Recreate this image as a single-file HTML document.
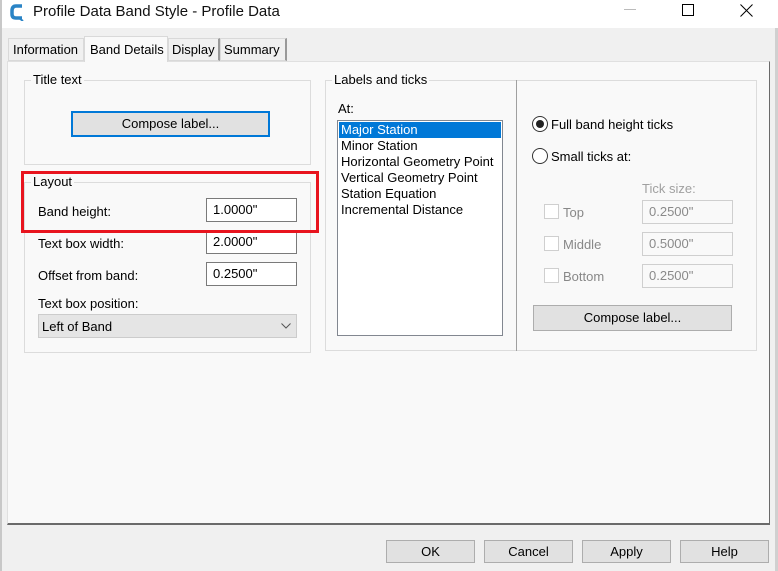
<!DOCTYPE html>
<html><head><style>
*{margin:0;padding:0;box-sizing:border-box}
body{width:778px;height:571px;background:#f0f0f0;font-family:"Liberation Sans",sans-serif;font-size:13px;color:#000;position:relative;overflow:hidden}
.a{position:absolute}
.gb{position:absolute;border:1px solid #dcdcdc}
.lg{position:absolute;background:#f9f9f9;padding:0 2px;top:-9px;font-size:13px}
.btn{position:absolute;background:#e1e1e1;border:1px solid #adadad;text-align:center}
.tb{position:absolute;background:#fff;border:1px solid #7a7a7a;padding-left:6px;line-height:22px}
.dis{color:#a0a0a0}
.cb{position:absolute;width:15px;height:15px;border:1px solid #cfcfcf;background:#fff}
.dtb{position:absolute;border:1px solid #cfcfcf;background:#f9f9f9;color:#8a8a8a;padding-left:6px;line-height:22px}
</style></head><body>
<div class="a" style="left:0;top:0;width:778px;height:28px;background:#fff"></div>
<div class="a" style="left:0;top:0;width:2px;height:571px;background:#c8c8c8"></div>
<div class="a" style="left:775px;top:28px;width:3px;height:543px;background:#d0d0d0"></div>
<svg class="a" style="left:9px;top:3px" width="18" height="18" viewBox="0 0 18 18"><path d="M13 3 H7 Q3 3 3 8 V11 Q3 15 7 15 H13" fill="none" stroke="#2a84c6" stroke-width="3.5"/><path d="M10 15 L14 18" stroke="#2a84c6" stroke-width="2"/></svg>
<div class="a" style="left:33px;top:3px;font-size:15px;color:#111">Profile Data Band Style - Profile Data</div>
<div class="a" style="left:624px;top:9px;width:12px;height:1px;background:#bbb"></div>
<div class="a" style="left:682px;top:4px;width:12px;height:12px;border:1px solid #000"></div>
<svg class="a" style="left:740px;top:4px" width="13" height="13"><path d="M0.5 0.5 L12.5 12.5 M12.5 0.5 L0.5 12.5" stroke="#000" stroke-width="1"/></svg>

<!-- tabs -->
<div class="a" style="left:8px;top:38px;width:76px;height:23px;border:1px solid #d9d9d9;background:#f0f0f0;padding:3px 0 0 4px">Information</div>
<div class="a" style="left:84px;top:36px;width:84px;height:26px;border:1px solid #d9d9d9;border-bottom:none;background:#f9f9f9;padding:5px 0 0 5px;z-index:2">Band Details</div>
<div class="a" style="left:168px;top:38px;width:52px;height:23px;border:1px solid #d9d9d9;border-right:2px solid #999;background:#f0f0f0;padding:3px 0 0 3px">Display</div>
<div class="a" style="left:220px;top:38px;width:67px;height:23px;border:1px solid #d9d9d9;border-right:2px solid #999;background:#f0f0f0;padding:3px 0 0 3px">Summary</div>
<div class="a" style="left:7px;top:61px;width:763px;height:464px;background:#f9f9f9;border:1px solid #e0e0e0;border-bottom:2px solid #6a6a6a;border-right:1px solid #6a6a6a"></div>

<!-- Title text -->
<div class="gb" style="left:24px;top:80px;width:287px;height:85px"><span class="lg" style="left:6px">Title text</span></div>
<div class="btn" style="left:71px;top:111px;width:199px;height:26px;border:2px solid #0078d7;line-height:22px">Compose label...</div>

<!-- Layout -->
<div class="gb" style="left:24px;top:182px;width:287px;height:171px"><span class="lg" style="left:6px">Layout</span></div>
<div class="a" style="left:38px;top:204px">Band height:</div>
<div class="tb" style="left:206px;top:198px;width:91px;height:24px">1.0000"</div>
<div class="a" style="left:38px;top:236px">Text box width:</div>
<div class="tb" style="left:206px;top:230px;width:91px;height:24px">2.0000"</div>
<div class="a" style="left:38px;top:268px">Offset from band:</div>
<div class="tb" style="left:206px;top:262px;width:91px;height:24px">0.2500"</div>
<div class="a" style="left:38px;top:296px">Text box position:</div>
<div class="a" style="left:38px;top:314px;width:259px;height:24px;background:#e5e5e5;border:1px solid #ccc;padding:4px 0 0 3px">Left of Band</div>
<svg class="a" style="left:281px;top:323px" width="10" height="6"><path d="M0.5 0.5 L5 5 L9.5 0.5" fill="none" stroke="#555"/></svg>
<div class="a" style="left:21px;top:171px;width:298px;height:62px;border:3px solid #e8141e"></div>

<!-- Labels and ticks -->
<div class="gb" style="left:325px;top:80px;width:432px;height:271px"><span class="lg" style="left:6px">Labels and ticks</span></div>
<div class="a" style="left:516px;top:80px;width:1px;height:271px;background:#a0a0a0"></div>
<div class="a" style="left:338px;top:101px">At:</div>
<div class="a" style="left:337px;top:120px;width:166px;height:216px;background:#fff;border:1px solid #828790;padding:1px;line-height:16px">
<div style="background:#0078d7;color:#fff;padding-left:2px">Major Station</div>
<div style="padding-left:2px">Minor Station</div>
<div style="padding-left:2px;white-space:nowrap">Horizontal Geometry Point</div>
<div style="padding-left:2px">Vertical Geometry Point</div>
<div style="padding-left:2px">Station Equation</div>
<div style="padding-left:2px">Incremental Distance</div>
</div>
<div class="a" style="left:532px;top:116px;width:16px;height:16px;border-radius:50%;border:1px solid #333;background:#fff"></div>
<div class="a" style="left:536px;top:120px;width:8px;height:8px;border-radius:50%;background:#222"></div>
<div class="a" style="left:551px;top:117px">Full band height ticks</div>
<div class="a" style="left:532px;top:148px;width:16px;height:16px;border-radius:50%;border:1px solid #333;background:#fff"></div>
<div class="a" style="left:551px;top:149px">Small ticks at:</div>
<div class="a dis" style="left:642px;top:181px">Tick size:</div>
<div class="cb" style="left:544px;top:204px"></div><div class="a dis" style="left:563px;top:205px;color:#888">Top</div>
<div class="dtb" style="left:642px;top:200px;width:91px;height:24px">0.2500"</div>
<div class="cb" style="left:544px;top:236px"></div><div class="a dis" style="left:563px;top:237px;color:#888">Middle</div>
<div class="dtb" style="left:642px;top:232px;width:91px;height:24px">0.5000"</div>
<div class="cb" style="left:544px;top:268px"></div><div class="a dis" style="left:563px;top:269px;color:#888">Bottom</div>
<div class="dtb" style="left:642px;top:264px;width:91px;height:24px">0.2500"</div>
<div class="btn" style="left:533px;top:305px;width:199px;height:26px;line-height:24px">Compose label...</div>

<!-- bottom buttons -->
<div class="btn" style="left:386px;top:540px;width:89px;height:23px;line-height:21px">OK</div>
<div class="btn" style="left:484px;top:540px;width:89px;height:23px;line-height:21px">Cancel</div>
<div class="btn" style="left:582px;top:540px;width:89px;height:23px;line-height:21px">Apply</div>
<div class="btn" style="left:680px;top:540px;width:89px;height:23px;line-height:21px">Help</div>
</body></html>
